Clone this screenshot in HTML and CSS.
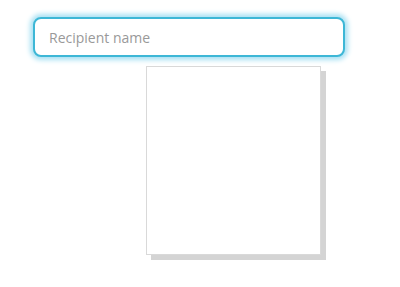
FILE: index.html
```html
<!DOCTYPE html>
<html>
<head>
<meta charset="utf-8">
<link rel="stylesheet" href="styles.css">
</head>
<body>
<div class="page">
  <input class="recipient" type="text" placeholder="Recipient name">
  <div class="dropdown"></div>
</div>
</body>
</html>
```
FILE: styles.css
```css
html, body {
  margin: 0;
  padding: 0;
  background: #fff;
}
.page {
  display: flex;
  flex-direction: column;
  align-items: flex-start;
  padding: 17px 0 0 33px;
  gap: 9px;
  min-height: 287px;
  box-sizing: border-box;
}
.recipient {
  box-sizing: border-box;
  width: 312px;
  height: 40px;
  margin: 0;
  padding: 0 0 0 14px;
  border: 2px solid #3db7d6;
  border-radius: 8px;
  box-shadow: 0 0 5px 3px #a9e1f3;
  outline: none;
  font-family: "Open Sans", "Noto Sans", sans-serif;
  font-size: 14px;
  color: #333;
  background: #fff;
}
.recipient::placeholder {
  color: #999;
}
.dropdown {
  box-sizing: border-box;
  margin-left: 113px;
  width: 175px;
  height: 189px;
  border: 1px solid #d9d9d9;
  background: #fff;
  box-shadow: 5px 5px 0 #d4d4d4;
}
```
